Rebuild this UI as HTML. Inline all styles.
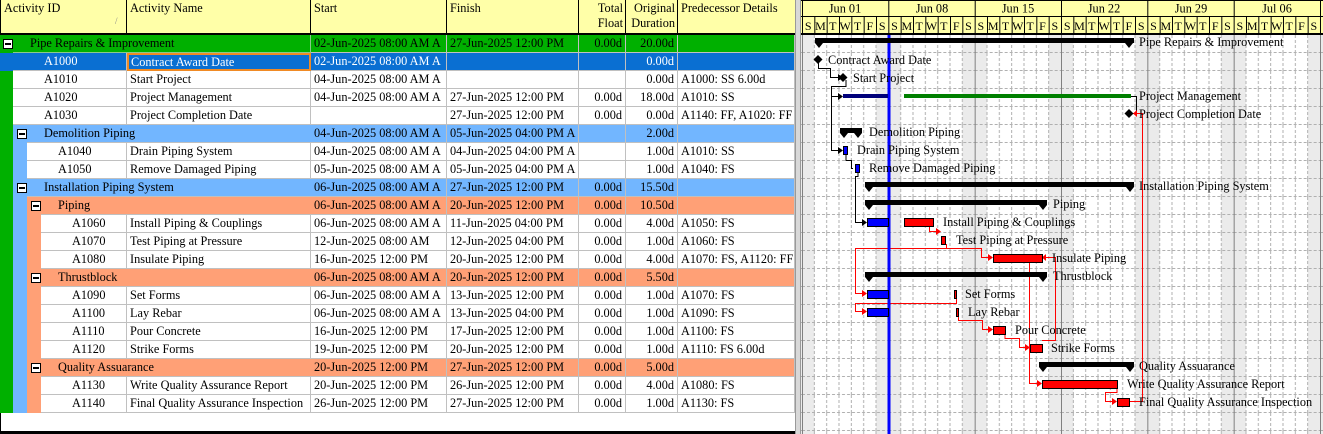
<!DOCTYPE html>
<html><head><meta charset="utf-8"><style>
*{margin:0;padding:0;box-sizing:border-box}
body{width:1323px;height:434px;overflow:hidden;background:#fff;position:relative;font-family:"Liberation Serif",serif;font-size:12.3px;color:#000}
.a{position:absolute}
.r{position:absolute;left:0;width:795px;height:18px}
.c{position:absolute;top:0;height:18px;border-right:1px solid #c0c0c0;border-bottom:1px solid #c0c0c0;line-height:17px;white-space:nowrap;overflow:hidden;padding-left:3px}
.rt{text-align:right;padding-right:3px;padding-left:0}
.b{position:absolute;top:0;height:18px}
.g{background:#00b000}.bl{background:#72b6ff}.o{background:#ffa076}.w{background:#fff}.s{background:#0a6fd2;color:#fff}
.box{position:absolute;top:4px;width:10px;height:10px;border:1px solid #000;background:#fff}
.box:after{content:"";position:absolute;left:1px;top:3px;width:6px;height:2px;background:#000}
.h{position:absolute;top:0;height:34px;background:#ffffa8;border-right:1px solid #000;padding:1px 3px;line-height:15px}
</style></head><body>
<!-- header -->
<div class="h" style="left:0;width:127px;border-left:1px solid #000">Activity ID<span class="a" style="left:114px;top:14px;color:#888;font-size:9px">/</span></div>
<div class="h" style="left:127px;width:184px">Activity Name</div>
<div class="h" style="left:311px;width:136px">Start</div>
<div class="h" style="left:447px;width:132px">Finish</div>
<div class="h" style="left:579px;width:47px;text-align:right;padding-right:2px">Total<br>Float</div>
<div class="h" style="left:626px;width:52px;text-align:right;padding-right:2px">Original<br>Duration</div>
<div class="h" style="left:678px;width:118px">Predecessor Details</div>
<div class="a" style="left:0;top:33px;width:796px;height:2px;background:#000"></div>
<div class="a" style="left:0;top:0;width:1px;height:434px;background:#000"></div>
<div class="a" style="left:0;top:431px;width:800px;height:3px;background:#000"></div>
<div class="a" style="left:795px;top:0;width:6px;height:434px;background:#d8d8d8;border-left:1px solid #999;border-right:1px solid #999"></div>

<!-- rows -->
<div class="r g" style="top:35px"><div class="box" style="left:3px"></div><div class="c" style="left:13px;width:298px;padding-left:17px;border-color:#8cc88c">Pipe Repairs &amp; Improvement</div><div class="c" style="left:311px;width:136px">02-Jun-2025 08:00 AM A</div><div class="c" style="left:447px;width:132px">27-Jun-2025 12:00 PM</div><div class="c rt" style="left:579px;width:47px">0.00d</div><div class="c rt" style="left:626px;width:52px">20.00d</div><div class="c" style="left:678px;width:117px"></div></div>

<div class="r s" style="top:53px"><div class="c" style="left:13px;width:114px;padding-left:31px">A1000</div><div class="c" style="left:127px;width:184px;border:2px solid #f08a24;line-height:14px;padding-left:2px">Contract Award Date</div><div class="c" style="left:311px;width:136px">02-Jun-2025 08:00 AM A</div><div class="c" style="left:447px;width:132px"></div><div class="c rt" style="left:579px;width:47px"></div><div class="c rt" style="left:626px;width:52px">0.00d</div><div class="c" style="left:678px;width:117px"></div></div>

<div class="r" style="top:71px"><div class="b g" style="left:0;width:13px"></div><div class="c" style="left:13px;width:114px;padding-left:31px">A1010</div><div class="c" style="left:127px;width:184px">Start Project</div><div class="c" style="left:311px;width:136px">04-Jun-2025 08:00 AM A</div><div class="c" style="left:447px;width:132px"></div><div class="c rt" style="left:579px;width:47px"></div><div class="c rt" style="left:626px;width:52px">0.00d</div><div class="c" style="left:678px;width:117px">A1000: SS 6.00d</div></div>

<div class="r" style="top:89px"><div class="b g" style="left:0;width:13px"></div><div class="c" style="left:13px;width:114px;padding-left:31px">A1020</div><div class="c" style="left:127px;width:184px">Project Management</div><div class="c" style="left:311px;width:136px">04-Jun-2025 08:00 AM A</div><div class="c" style="left:447px;width:132px">27-Jun-2025 12:00 PM</div><div class="c rt" style="left:579px;width:47px">0.00d</div><div class="c rt" style="left:626px;width:52px">18.00d</div><div class="c" style="left:678px;width:117px">A1010: SS</div></div>

<div class="r" style="top:107px"><div class="b g" style="left:0;width:13px"></div><div class="c" style="left:13px;width:114px;padding-left:31px">A1030</div><div class="c" style="left:127px;width:184px">Project Completion Date</div><div class="c" style="left:311px;width:136px"></div><div class="c" style="left:447px;width:132px">27-Jun-2025 12:00 PM</div><div class="c rt" style="left:579px;width:47px">0.00d</div><div class="c rt" style="left:626px;width:52px">0.00d</div><div class="c" style="left:678px;width:117px">A1140: FF, A1020: FF</div></div>

<div class="r bl" style="top:125px"><div class="b g" style="left:0;width:13px"></div><div class="box" style="left:17px"></div><div class="c" style="left:27px;width:284px;padding-left:17px;border-right:none">Demolition Piping</div><div class="c" style="left:311px;width:136px">04-Jun-2025 08:00 AM A</div><div class="c" style="left:447px;width:132px">05-Jun-2025 04:00 PM A</div><div class="c rt" style="left:579px;width:47px"></div><div class="c rt" style="left:626px;width:52px">2.00d</div><div class="c" style="left:678px;width:117px"></div></div>

<div class="r" style="top:143px"><div class="b g" style="left:0;width:13px"></div><div class="b bl" style="left:13px;width:14px"></div><div class="c" style="left:27px;width:100px;padding-left:31px">A1040</div><div class="c" style="left:127px;width:184px">Drain Piping System</div><div class="c" style="left:311px;width:136px">04-Jun-2025 08:00 AM A</div><div class="c" style="left:447px;width:132px">04-Jun-2025 04:00 PM A</div><div class="c rt" style="left:579px;width:47px"></div><div class="c rt" style="left:626px;width:52px">1.00d</div><div class="c" style="left:678px;width:117px">A1010: SS</div></div>

<div class="r" style="top:161px"><div class="b g" style="left:0;width:13px"></div><div class="b bl" style="left:13px;width:14px"></div><div class="c" style="left:27px;width:100px;padding-left:31px">A1050</div><div class="c" style="left:127px;width:184px">Remove Damaged Piping</div><div class="c" style="left:311px;width:136px">05-Jun-2025 08:00 AM A</div><div class="c" style="left:447px;width:132px">05-Jun-2025 04:00 PM A</div><div class="c rt" style="left:579px;width:47px"></div><div class="c rt" style="left:626px;width:52px">1.00d</div><div class="c" style="left:678px;width:117px">A1040: FS</div></div>

<div class="r bl" style="top:179px"><div class="b g" style="left:0;width:13px"></div><div class="box" style="left:17px"></div><div class="c" style="left:27px;width:284px;padding-left:17px;border-right:none">Installation Piping System</div><div class="c" style="left:311px;width:136px">06-Jun-2025 08:00 AM A</div><div class="c" style="left:447px;width:132px">27-Jun-2025 12:00 PM</div><div class="c rt" style="left:579px;width:47px">0.00d</div><div class="c rt" style="left:626px;width:52px">15.50d</div><div class="c" style="left:678px;width:117px"></div></div>

<div class="r o" style="top:197px"><div class="b g" style="left:0;width:13px"></div><div class="b bl" style="left:13px;width:14px"></div><div class="box" style="left:31px"></div><div class="c" style="left:41px;width:270px;padding-left:17px;border-right:none">Piping</div><div class="c" style="left:311px;width:136px">06-Jun-2025 08:00 AM A</div><div class="c" style="left:447px;width:132px">20-Jun-2025 12:00 PM</div><div class="c rt" style="left:579px;width:47px">0.00d</div><div class="c rt" style="left:626px;width:52px">10.50d</div><div class="c" style="left:678px;width:117px"></div></div>

<div class="r" style="top:215px"><div class="b g" style="left:0;width:13px"></div><div class="b bl" style="left:13px;width:14px"></div><div class="b o" style="left:27px;width:14px"></div><div class="c" style="left:41px;width:86px;padding-left:31px">A1060</div><div class="c" style="left:127px;width:184px">Install Piping &amp; Couplings</div><div class="c" style="left:311px;width:136px">06-Jun-2025 08:00 AM A</div><div class="c" style="left:447px;width:132px">11-Jun-2025 04:00 PM</div><div class="c rt" style="left:579px;width:47px">0.00d</div><div class="c rt" style="left:626px;width:52px">4.00d</div><div class="c" style="left:678px;width:117px">A1050: FS</div></div>

<div class="r" style="top:233px"><div class="b g" style="left:0;width:13px"></div><div class="b bl" style="left:13px;width:14px"></div><div class="b o" style="left:27px;width:14px"></div><div class="c" style="left:41px;width:86px;padding-left:31px">A1070</div><div class="c" style="left:127px;width:184px">Test Piping at Pressure</div><div class="c" style="left:311px;width:136px">12-Jun-2025 08:00 AM</div><div class="c" style="left:447px;width:132px">12-Jun-2025 04:00 PM</div><div class="c rt" style="left:579px;width:47px">0.00d</div><div class="c rt" style="left:626px;width:52px">1.00d</div><div class="c" style="left:678px;width:117px">A1060: FS</div></div>

<div class="r" style="top:251px"><div class="b g" style="left:0;width:13px"></div><div class="b bl" style="left:13px;width:14px"></div><div class="b o" style="left:27px;width:14px"></div><div class="c" style="left:41px;width:86px;padding-left:31px">A1080</div><div class="c" style="left:127px;width:184px">Insulate Piping</div><div class="c" style="left:311px;width:136px">16-Jun-2025 12:00 PM</div><div class="c" style="left:447px;width:132px">20-Jun-2025 12:00 PM</div><div class="c rt" style="left:579px;width:47px">0.00d</div><div class="c rt" style="left:626px;width:52px">4.00d</div><div class="c" style="left:678px;width:117px">A1070: FS, A1120: FF</div></div>

<div class="r o" style="top:269px"><div class="b g" style="left:0;width:13px"></div><div class="b bl" style="left:13px;width:14px"></div><div class="box" style="left:31px"></div><div class="c" style="left:41px;width:270px;padding-left:17px;border-right:none">Thrustblock</div><div class="c" style="left:311px;width:136px">06-Jun-2025 08:00 AM A</div><div class="c" style="left:447px;width:132px">20-Jun-2025 12:00 PM</div><div class="c rt" style="left:579px;width:47px">0.00d</div><div class="c rt" style="left:626px;width:52px">5.50d</div><div class="c" style="left:678px;width:117px"></div></div>

<div class="r" style="top:287px"><div class="b g" style="left:0;width:13px"></div><div class="b bl" style="left:13px;width:14px"></div><div class="b o" style="left:27px;width:14px"></div><div class="c" style="left:41px;width:86px;padding-left:31px">A1090</div><div class="c" style="left:127px;width:184px">Set Forms</div><div class="c" style="left:311px;width:136px">06-Jun-2025 08:00 AM A</div><div class="c" style="left:447px;width:132px">13-Jun-2025 12:00 PM</div><div class="c rt" style="left:579px;width:47px">0.00d</div><div class="c rt" style="left:626px;width:52px">1.00d</div><div class="c" style="left:678px;width:117px">A1070: FS</div></div>

<div class="r" style="top:305px"><div class="b g" style="left:0;width:13px"></div><div class="b bl" style="left:13px;width:14px"></div><div class="b o" style="left:27px;width:14px"></div><div class="c" style="left:41px;width:86px;padding-left:31px">A1100</div><div class="c" style="left:127px;width:184px">Lay Rebar</div><div class="c" style="left:311px;width:136px">06-Jun-2025 08:00 AM A</div><div class="c" style="left:447px;width:132px">13-Jun-2025 04:00 PM</div><div class="c rt" style="left:579px;width:47px">0.00d</div><div class="c rt" style="left:626px;width:52px">1.00d</div><div class="c" style="left:678px;width:117px">A1090: FS</div></div>

<div class="r" style="top:323px"><div class="b g" style="left:0;width:13px"></div><div class="b bl" style="left:13px;width:14px"></div><div class="b o" style="left:27px;width:14px"></div><div class="c" style="left:41px;width:86px;padding-left:31px">A1110</div><div class="c" style="left:127px;width:184px">Pour Concrete</div><div class="c" style="left:311px;width:136px">16-Jun-2025 12:00 PM</div><div class="c" style="left:447px;width:132px">17-Jun-2025 12:00 PM</div><div class="c rt" style="left:579px;width:47px">0.00d</div><div class="c rt" style="left:626px;width:52px">1.00d</div><div class="c" style="left:678px;width:117px">A1100: FS</div></div>

<div class="r" style="top:341px"><div class="b g" style="left:0;width:13px"></div><div class="b bl" style="left:13px;width:14px"></div><div class="b o" style="left:27px;width:14px"></div><div class="c" style="left:41px;width:86px;padding-left:31px">A1120</div><div class="c" style="left:127px;width:184px">Strike Forms</div><div class="c" style="left:311px;width:136px">19-Jun-2025 12:00 PM</div><div class="c" style="left:447px;width:132px">20-Jun-2025 12:00 PM</div><div class="c rt" style="left:579px;width:47px">0.00d</div><div class="c rt" style="left:626px;width:52px">1.00d</div><div class="c" style="left:678px;width:117px">A1110: FS 6.00d</div></div>

<div class="r o" style="top:359px"><div class="b g" style="left:0;width:13px"></div><div class="b bl" style="left:13px;width:14px"></div><div class="box" style="left:31px"></div><div class="c" style="left:41px;width:270px;padding-left:17px;border-right:none">Quality Assuarance</div><div class="c" style="left:311px;width:136px">20-Jun-2025 12:00 PM</div><div class="c" style="left:447px;width:132px">27-Jun-2025 12:00 PM</div><div class="c rt" style="left:579px;width:47px">0.00d</div><div class="c rt" style="left:626px;width:52px">5.00d</div><div class="c" style="left:678px;width:117px"></div></div>

<div class="r" style="top:377px"><div class="b g" style="left:0;width:13px"></div><div class="b bl" style="left:13px;width:14px"></div><div class="b o" style="left:27px;width:14px"></div><div class="c" style="left:41px;width:86px;padding-left:31px">A1130</div><div class="c" style="left:127px;width:184px">Write Quality Assurance Report</div><div class="c" style="left:311px;width:136px">20-Jun-2025 12:00 PM</div><div class="c" style="left:447px;width:132px">26-Jun-2025 12:00 PM</div><div class="c rt" style="left:579px;width:47px">0.00d</div><div class="c rt" style="left:626px;width:52px">4.00d</div><div class="c" style="left:678px;width:117px">A1080: FS</div></div>

<div class="r" style="top:395px"><div class="b g" style="left:0;width:13px"></div><div class="b bl" style="left:13px;width:14px"></div><div class="b o" style="left:27px;width:14px"></div><div class="c" style="left:41px;width:86px;padding-left:31px">A1140</div><div class="c" style="left:127px;width:184px">Final Quality Assurance Inspection</div><div class="c" style="left:311px;width:136px">26-Jun-2025 12:00 PM</div><div class="c" style="left:447px;width:132px">27-Jun-2025 12:00 PM</div><div class="c rt" style="left:579px;width:47px">0.00d</div><div class="c rt" style="left:626px;width:52px">1.00d</div><div class="c" style="left:678px;width:117px">A1130: FS</div></div>

<!-- gantt -->
<svg class="a" style="left:801px;top:0" width="522" height="434" viewBox="801 0 522 434" font-family="Liberation Serif, serif" font-size="12.3">
<defs>
<pattern id="wk" x="802" y="35" width="86.333" height="18" patternUnits="userSpaceOnUse">
<rect x="0" y="0" width="86.333" height="18" fill="#fff"/>
<rect x="0" y="0" width="12.333" height="18" fill="#ebebeb"/>
<rect x="74" y="0" width="12.333" height="18" fill="#ebebeb"/>
<g stroke="#b0b0b0" stroke-dasharray="3,2" stroke-width="1">
<line x1="12.333" y1="0" x2="12.333" y2="18"/><line x1="24.667" y1="0" x2="24.667" y2="18"/><line x1="37" y1="0" x2="37" y2="18"/><line x1="49.333" y1="0" x2="49.333" y2="18"/><line x1="61.667" y1="0" x2="61.667" y2="18"/><line x1="74" y1="0" x2="74" y2="18"/>
<line x1="0" y1="17.5" x2="86.333" y2="17.5"/></g>
<line x1="0.5" y1="0" x2="0.5" y2="18" stroke="#808080"/>
</pattern>
<pattern id="dy" x="802" y="17" width="12.333" height="17" patternUnits="userSpaceOnUse"><line x1="0.5" y1="0" x2="0.5" y2="17" stroke="#000"/></pattern>
</defs>
<rect x="801" y="35" width="522" height="399" fill="url(#wk)"/>
<rect x="801" y="0" width="522" height="34" fill="#ffffa8"/>
<rect x="801" y="17" width="522" height="17" fill="url(#dy)"/>
<g stroke="#000"><line x1="801" y1="16.5" x2="1323" y2="16.5"/><line x1="801" y1="0.5" x2="1323" y2="0.5"/><line x1="801" y1="34" x2="1323" y2="34" stroke-width="2"/>
<line x1="802.5" y1="0" x2="802.5" y2="17"/><line x1="888.8" y1="0" x2="888.8" y2="17"/><line x1="975.2" y1="0" x2="975.2" y2="17"/><line x1="1061.5" y1="0" x2="1061.5" y2="17"/><line x1="1147.8" y1="0" x2="1147.8" y2="17"/><line x1="1234.2" y1="0" x2="1234.2" y2="17"/><line x1="1320.5" y1="0" x2="1320.5" y2="17"/></g>
<g text-anchor="middle"><text x="845" y="12.5">Jun 01</text><text x="932" y="12.5">Jun 08</text><text x="1018" y="12.5">Jun 15</text><text x="1104" y="12.5">Jun 22</text><text x="1191" y="12.5">Jun 29</text><text x="1277" y="12.5">Jul 06</text>
<g font-size="12">
<text x="808.2" y="30">S</text><text x="820.5" y="30">M</text><text x="832.8" y="30">T</text><text x="845.2" y="30">W</text><text x="857.5" y="30">T</text><text x="869.8" y="30">F</text><text x="882.2" y="30">S</text>
<text x="894.5" y="30">S</text><text x="906.8" y="30">M</text><text x="919.2" y="30">T</text><text x="931.5" y="30">W</text><text x="943.8" y="30">T</text><text x="956.2" y="30">F</text><text x="968.5" y="30">S</text>
<text x="980.8" y="30">S</text><text x="993.2" y="30">M</text><text x="1005.5" y="30">T</text><text x="1017.8" y="30">W</text><text x="1030.2" y="30">T</text><text x="1042.5" y="30">F</text><text x="1054.8" y="30">S</text>
<text x="1067.2" y="30">S</text><text x="1079.5" y="30">M</text><text x="1091.8" y="30">T</text><text x="1104.2" y="30">W</text><text x="1116.5" y="30">T</text><text x="1128.8" y="30">F</text><text x="1141.2" y="30">S</text>
<text x="1153.5" y="30">S</text><text x="1165.8" y="30">M</text><text x="1178.2" y="30">T</text><text x="1190.5" y="30">W</text><text x="1202.8" y="30">T</text><text x="1215.2" y="30">F</text><text x="1227.5" y="30">S</text>
<text x="1239.8" y="30">S</text><text x="1252.2" y="30">M</text><text x="1264.5" y="30">T</text><text x="1276.8" y="30">W</text><text x="1289.2" y="30">T</text><text x="1301.5" y="30">F</text><text x="1313.8" y="30">S</text>
</g></g>

<g fill="none" stroke="#000" stroke-width="1">
<path d="M818.5,62 V68.5 H830.5 V77.5 H840"/>
<path d="M846,80 V86.5 H831.5 V150.5 H841"/>
<path d="M831.5,96.5 H841"/>
<path d="M846,154 V160.5 H851.5 V168.5 H853"/>
<path d="M858,172 V176.5 H855.5 V222.5 H865"/>
<path d="M1131,96.5 H1136.5 V113"/>
</g>
<g fill="none" stroke="#f00" stroke-width="1">
<path d="M929.5,226 V231.5 H939"/>
<path d="M946.5,244 V248.5 H855.5 V293.5 H865"/>
<path d="M946.5,248.5 H981.5 V257.5 H991"/>
<path d="M956.5,297 V303.5 H855.5 V311.5 H865"/>
<path d="M958.5,315 V320.5 H982.5 V329.5 H991"/>
<path d="M1005,333 V338.5 H1019.5 V347.5 H1028"/>
<path d="M1042,257.5 H1055.5 V340.5 H1042"/>
<path d="M1029.5,262 V383.5 H1040"/>
<path d="M1117,387 V392.5 H1105.5 V401.5 H1115"/>
<path d="M1129,401.5 H1142.5 V113.5 H1133"/>
</g>
<g fill="#000"><path d="M838,74 l5,3.5 -5,3.5z"/><path d="M838,93 l5,3.5 -5,3.5z"/><path d="M838,147 l5,3.5 -5,3.5z"/><path d="M862,219 l5,3.5 -5,3.5z"/></g>
<g fill="#f00"><path d="M936,228 l5,3.5 -5,3.5z"/><path d="M988,254 l5,3.5 -5,3.5z"/><path d="M862,290 l5,3.5 -5,3.5z"/><path d="M862,308 l5,3.5 -5,3.5z"/><path d="M988,326 l5,3.5 -5,3.5z"/><path d="M1025,344 l5,3.5 -5,3.5z"/><path d="M1037,380 l5,3.5 -5,3.5z"/><path d="M1112,398 l5,3.5 -5,3.5z"/><path d="M1046,254 l-4,3.5 4,3.5z"/><path d="M1137,110 l-4,3.5 4,3.5z"/></g>

<rect x="887.5" y="35" width="3" height="399" fill="#0000ff"/>

<g fill="#000">
<path d="M815,38 H1134 V43 H1133 l-4,5 -4,-5 H823 l-4,5 -4,-5z"/>
<path d="M840,128 H862 V133 l-4,5 -4,-5 H848 l-4,5 -4,-5z"/>
<path d="M865,182 H1134 V187 l-4,5 -4,-5 H873 l-4,5 -4,-5z"/>
<path d="M865,200 H1047 V205 l-4,5 -4,-5 H873 l-4,5 -4,-5z"/>
<path d="M865,272 H1047 V277 l-4,5 -4,-5 H873 l-4,5 -4,-5z"/>
<path d="M1039,362 H1134 V367 l-4,5 -4,-5 H1047 l-4,5 -4,-5z"/>
<path d="M818,55 l4.5,4.5 -4.5,4.5 -4.5,-4.5z"/>
<path d="M843,73 l4.5,4.5 -4.5,4.5 -4.5,-4.5z"/>
<path d="M1129,109 l4.5,4.5 -4.5,4.5 -4.5,-4.5z"/>
</g>
<rect x="843" y="94" width="45" height="4" fill="#00007a"/>
<rect x="904" y="94" width="227" height="4" fill="#008000"/>
<g stroke="#000" stroke-width="1">
<rect x="843.5" y="146.5" width="4" height="8" fill="#0000ff"/>
<rect x="855.5" y="164.5" width="4" height="8" fill="#0000ff"/>
<rect x="867.5" y="218.5" width="21" height="8" fill="#0000ff"/>
<rect x="904.5" y="218.5" width="29" height="8" fill="#f00"/>
<rect x="941.5" y="236.5" width="4" height="8" fill="#f00"/>
<rect x="993.5" y="254.5" width="49" height="8" fill="#f00"/>
<rect x="867.5" y="290.5" width="21" height="8" fill="#0000ff"/>
<rect x="954.5" y="290.5" width="2" height="8" fill="#f00"/>
<rect x="867.5" y="308.5" width="21" height="8" fill="#0000ff"/>
<rect x="956.5" y="308.5" width="2" height="8" fill="#f00"/>
<rect x="993.5" y="326.5" width="12" height="8" fill="#f00"/>
<rect x="1030.5" y="344.5" width="12" height="8" fill="#f00"/>
<rect x="1042.5" y="380.5" width="75" height="8" fill="#f00"/>
<rect x="1117.5" y="398.5" width="12" height="8" fill="#f00"/>
</g>
<g>
<text x="1139" y="46">Pipe Repairs &amp; Improvement</text>
<text x="828" y="64">Contract Award Date</text>
<text x="853" y="82">Start Project</text>
<text x="1139" y="100">Project Management</text>
<text x="1139" y="118">Project Completion Date</text>
<text x="869" y="136">Demolition Piping</text>
<text x="857" y="154">Drain Piping System</text>
<text x="869" y="172">Remove Damaged Piping</text>
<text x="1139" y="190">Installation Piping System</text>
<text x="1053" y="208">Piping</text>
<text x="943" y="226">Install Piping &amp; Couplings</text>
<text x="956" y="244">Test Piping at Pressure</text>
<text x="1052" y="262">Insulate Piping</text>
<text x="1053" y="280">Thrustblock</text>
<text x="965" y="298">Set Forms</text>
<text x="968" y="316">Lay Rebar</text>
<text x="1015" y="334">Pour Concrete</text>
<text x="1051" y="352">Strike Forms</text>
<text x="1139" y="370">Quality Assuarance</text>
<text x="1127" y="388">Write Quality Assurance Report</text>
<text x="1139" y="406">Final Quality Assurance Inspection</text>
</g>
</svg>
</body></html>
